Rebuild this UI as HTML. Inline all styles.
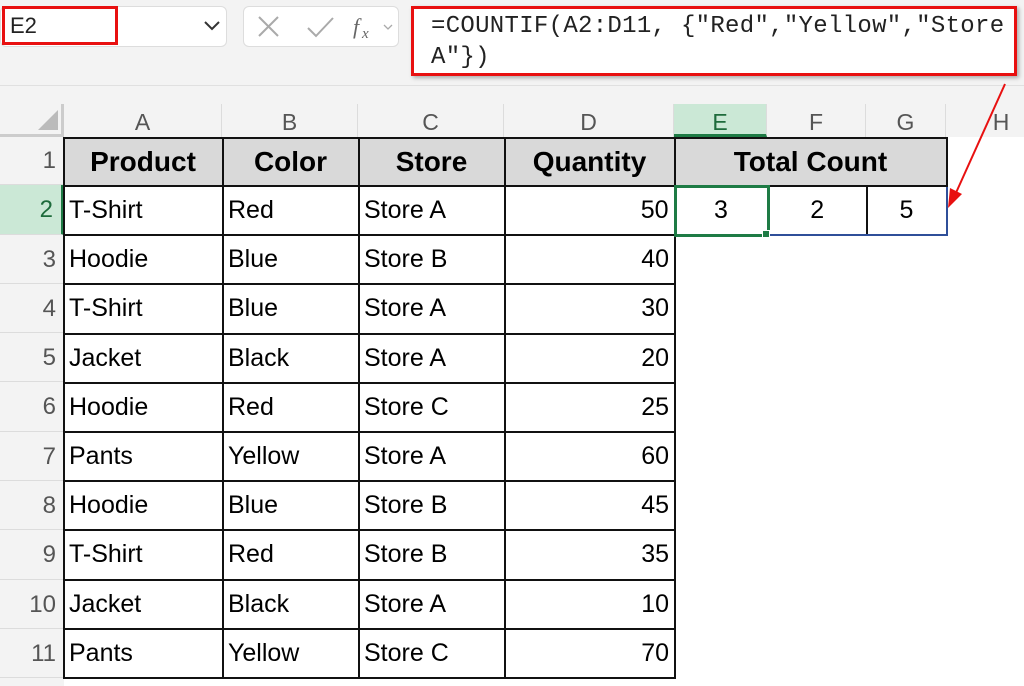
<!DOCTYPE html>
<html><head><meta charset="utf-8"><style>
*{margin:0;padding:0;box-sizing:border-box}
body{width:1024px;height:686px;background:#f3f3f3;position:relative;overflow:hidden;font-family:"Liberation Sans",Arial,sans-serif}
.abs{position:absolute}
#grid{position:absolute;left:64px;top:137px;background:#fff;width:960px;height:549px}
table{position:absolute;left:63px;top:137px;border-collapse:collapse;table-layout:fixed}
td{border:2px solid #111;height:49.2px;font-size:25px;color:#000;padding:0 5px 0 4px;white-space:nowrap;overflow:hidden}
tr.h td{background:#d9d9d9;font-weight:bold;font-size:28px;text-align:center;height:48px}
td.r{text-align:right}
.colh{position:absolute;top:104px;height:33px;font-size:23px;color:#555;text-align:center;line-height:36px;border-right:1px solid #dcdcdc}
.rowh{position:absolute;left:0;width:64px;font-size:24px;color:#555;text-align:right;padding-right:8px;border-bottom:1px solid #dcdcdc}
</style></head><body>
<div class="abs" style="left:0;top:6px;width:227px;height:41px;background:#fff;border:1px solid #ddd;border-radius:6px"></div>
<div class="abs" style="left:2px;top:6px;width:116px;height:39px;border:3px solid #e81010"></div>
<div class="abs" style="left:10px;top:13px;font-size:22px;color:#222">E2</div>
<svg class="abs" style="left:203px;top:20px" width="18" height="12"><path d="M2 2 L9 9 L16 2" fill="none" stroke="#333" stroke-width="2"/></svg>
<div class="abs" style="left:243px;top:6px;width:156px;height:41px;background:#fff;border:1px solid #ddd;border-radius:6px"></div>
<svg class="abs" style="left:256px;top:14px" width="140" height="26">
<path d="M3 3 L22 22 M22 3 L3 22" stroke="#aaa" stroke-width="2" fill="none"/>
<path d="M52 14 L60 22 L77 4" stroke="#aaa" stroke-width="2" fill="none"/>
<text x="97" y="20" font-family="Liberation Serif" font-style="italic" font-size="22" fill="#666">f</text>
<text x="106" y="24" font-family="Liberation Serif" font-style="italic" font-size="15" fill="#666">x</text>
<path d="M128 11 L132 15 L136 11" stroke="#aaa" stroke-width="1.3" fill="none"/>
</svg>
<div class="abs" style="left:411px;top:6px;width:606px;height:70px;background:#fff;border:3px solid #e81010;box-shadow:2px 2px 4px rgba(0,0,0,.3)"></div>
<div class="abs" style="left:431px;top:11px;font-family:'Liberation Mono',monospace;font-size:24px;letter-spacing:0.3px;line-height:31px;color:#222;white-space:pre">=COUNTIF(A2:D11, {"Red","Yellow","Store
A"})</div>
<div class="abs" style="left:0;top:85px;width:1024px;height:1px;background:#e0e0e0"></div>
<div class="abs" style="left:0;top:104px;width:64px;height:33px;border-right:3px solid #ccc;border-bottom:3px solid #ccc"></div>
<svg class="abs" style="left:36px;top:108px" width="24" height="24"><path d="M22 2 L22 22 L2 22 Z" fill="#bbb"/></svg>
<div class="colh" style="left:64px;width:158px">A</div>
<div class="colh" style="left:222px;width:136px">B</div>
<div class="colh" style="left:358px;width:146px">C</div>
<div class="colh" style="left:504px;width:170px">D</div>
<div class="colh" style="left:674px;width:93px;background:#cbe8d6;color:#1e6b3c;border-bottom:3px solid #1e7b45">E</div>
<div class="colh" style="left:767px;width:99px">F</div>
<div class="colh" style="left:866px;width:80px">G</div>
<div class="colh" style="left:946px;width:110px;border:none">H</div>
<div id="grid"></div>
<div class="rowh" style="top:137px;height:48px;line-height:48px">1</div>
<div class="rowh" style="top:185px;height:50px;line-height:50px;background:#cbe8d6;color:#1e6b3c;border-right:3px solid #1e7b45">2</div>
<div class="rowh" style="top:235px;height:49px;line-height:49px">3</div>
<div class="rowh" style="top:284px;height:49px;line-height:49px">4</div>
<div class="rowh" style="top:333px;height:49px;line-height:49px">5</div>
<div class="rowh" style="top:382px;height:50px;line-height:50px">6</div>
<div class="rowh" style="top:432px;height:49px;line-height:49px">7</div>
<div class="rowh" style="top:481px;height:49px;line-height:49px">8</div>
<div class="rowh" style="top:530px;height:50px;line-height:50px">9</div>
<div class="rowh" style="top:580px;height:49px;line-height:49px">10</div>
<div class="rowh" style="top:629px;height:49px;line-height:49px">11</div>
<table>
<colgroup><col style="width:159px"><col style="width:136px"><col style="width:146px"><col style="width:170px"><col style="width:93px"><col style="width:99px"><col style="width:80px"></colgroup>
<tr class="h"><td>Product</td><td>Color</td><td>Store</td><td>Quantity</td><td colspan="3">Total Count</td></tr>
<tr><td>T-Shirt</td><td>Red</td><td>Store A</td><td class="r">50</td><td style="text-align:center;border:3px solid #1e7b45">3</td><td style="text-align:center;border-top-color:#4472c4;border-bottom-color:#2f4f99">2</td><td style="text-align:center;border-top-color:#4472c4;border-bottom-color:#2f4f99;border-right-color:#2f4f99">5</td></tr>
<tr><td>Hoodie</td><td>Blue</td><td>Store B</td><td class="r">40</td></tr>
<tr><td>T-Shirt</td><td>Blue</td><td>Store A</td><td class="r">30</td></tr>
<tr><td>Jacket</td><td>Black</td><td>Store A</td><td class="r">20</td></tr>
<tr><td>Hoodie</td><td>Red</td><td>Store C</td><td class="r">25</td></tr>
<tr><td>Pants</td><td>Yellow</td><td>Store A</td><td class="r">60</td></tr>
<tr><td>Hoodie</td><td>Blue</td><td>Store B</td><td class="r">45</td></tr>
<tr><td>T-Shirt</td><td>Red</td><td>Store B</td><td class="r">35</td></tr>
<tr><td>Jacket</td><td>Black</td><td>Store A</td><td class="r">10</td></tr>
<tr><td>Pants</td><td>Yellow</td><td>Store C</td><td class="r">70</td></tr>
</table>
<div class="abs" style="left:762px;top:230px;width:8px;height:8px;background:#1e7b45;border:1px solid #fff"></div>
<svg class="abs" style="left:0;top:0" width="1024" height="686">
<line x1="1005" y1="84" x2="955" y2="195" stroke="#e81010" stroke-width="2"/>
<path d="M948 208 L950 188 L962 194 Z" fill="#e81010"/>
</svg>
</body></html>
